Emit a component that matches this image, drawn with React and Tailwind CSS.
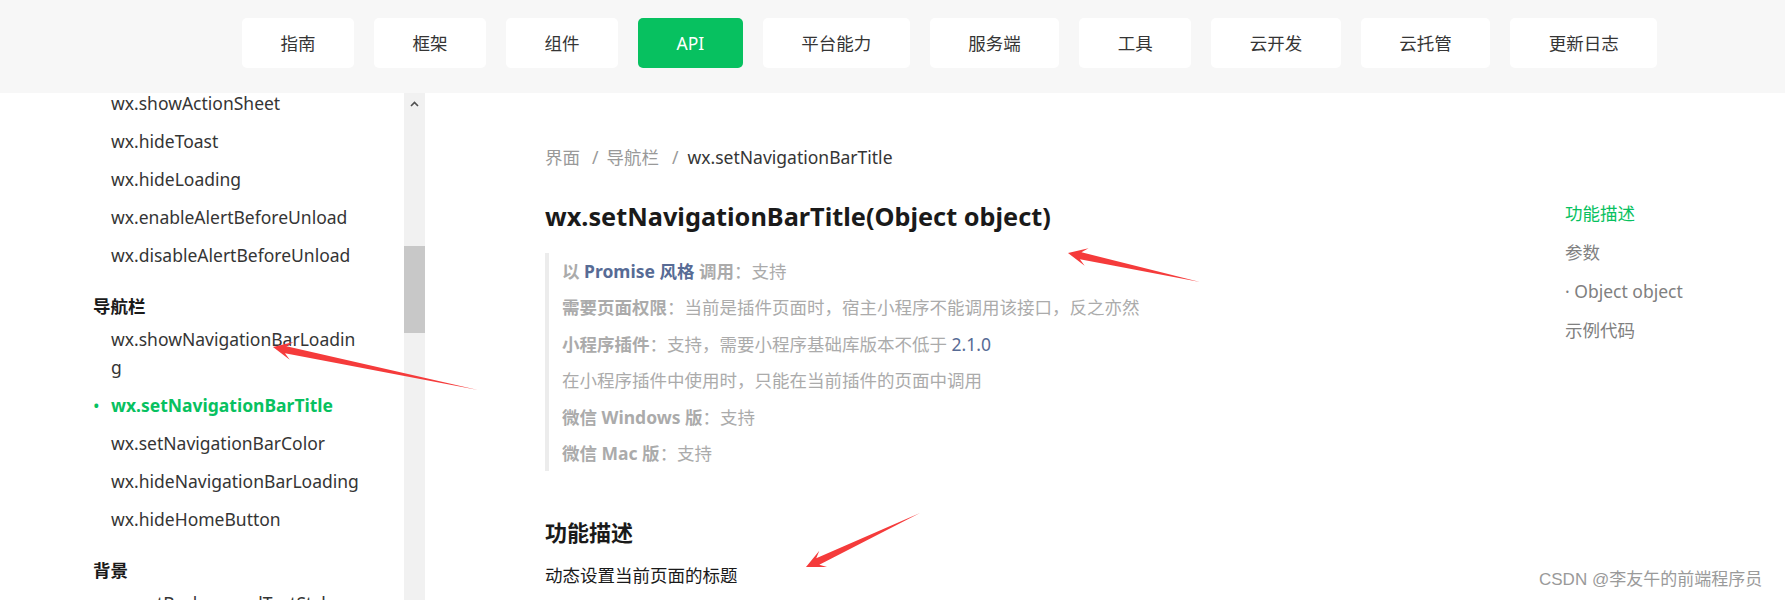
import React from 'react';

const tabs = ['指南', '框架', '组件', 'API', '平台能力', '服务端', '工具', '云开发', '云托管', '更新日志'];

const sideItems = [
  { type: 'item', text: 'wx.showActionSheet' },
  { type: 'item', text: 'wx.hideToast' },
  { type: 'item', text: 'wx.hideLoading' },
  { type: 'item', text: 'wx.enableAlertBeforeUnload' },
  { type: 'item', text: 'wx.disableAlertBeforeUnload' },
  { type: 'head', text: '导航栏' },
  { type: 'item', text: 'wx.showNavigationBarLoadin', wrap: 'g' },
  { type: 'item', text: 'wx.setNavigationBarTitle', active: true },
  { type: 'item', text: 'wx.setNavigationBarColor' },
  { type: 'item', text: 'wx.hideNavigationBarLoading' },
  { type: 'item', text: 'wx.hideHomeButton' },
  { type: 'head', text: '背景' },
  { type: 'item', text: 'wx.setBackgroundTextStyle' },
];

const toc = ['功能描述', '参数', '· Object object', '示例代码'];

// red annotation arrows: tail -> tip
const arrows = [
  { t: [1200, 282], p: [1068, 253] },
  { t: [478, 390], p: [273, 347] },
  { t: [920, 513], p: [806, 567] },
];

const arrowPoints = ({ t, p }) => {
  const dx = p[0] - t[0];
  const dy = p[1] - t[1];
  const len = Math.hypot(dx, dy);
  const d = [dx / len, dy / len];
  const n = [-d[1], d[0]];
  const at = (back, side) => [p[0] - d[0] * back + n[0] * side, p[1] - d[1] * back + n[1] * side];
  const pts = [t, at(13, 3.6), at(19, 9), p, at(19, -9), at(13, -3.6)];
  return pts.map((q) => q.join(',')).join(' ');
};

const App = () => {
  return (
    <div className="relative w-[1785px] h-[600px] overflow-hidden bg-white font-['Noto_Sans','Noto_Sans_CJK_SC',sans-serif] text-[17.5px]">
      {/* Top tabs */}
      <header className="h-[93px] bg-[#f7f7f7] flex items-start pt-[18px] pl-[242px] gap-[20px]">
        {tabs.map((t) => (
          <div
            key={t}
            className={
              t === 'API'
                ? 'h-[50px] px-[38.5px] flex items-center rounded-[5px] bg-[#07c160] text-white'
                : 'h-[50px] px-[38.5px] flex items-center rounded-[5px] bg-white text-[#353535]'
            }
          >
            {t}
          </div>
        ))}
      </header>

      <div className="flex h-[507px]">
        {/* Sidebar */}
        <aside className="w-[404px] overflow-hidden">
          <div className="-mt-[9px] pl-[93px]">
            {sideItems.map((it, i) =>
              it.type === 'head' ? (
                <div key={i} className="mt-[18px] h-[28px] leading-[28px] font-bold text-[#1a1a1a]">
                  {it.text}
                </div>
              ) : (
                <div key={i} className="flex py-[5px] leading-[28px]">
                  <span className="w-[18px] shrink-0 text-[#07c160]">{it.active ? '•' : ''}</span>
                  <span className={it.active ? 'font-bold text-[#07c160]' : 'text-[#353535]'}>
                    {it.text}
                    {it.wrap && (
                      <>
                        <br />
                        {it.wrap}
                      </>
                    )}
                  </span>
                </div>
              )
            )}
          </div>
        </aside>

        {/* Scrollbar */}
        <div className="w-[21px] bg-[#f1f1f1] flex flex-col">
          <div className="h-[21px] flex items-center justify-center">
            <svg width="9" height="6" viewBox="0 0 9 6">
              <polyline points="1,5 4.5,1.5 8,5" fill="none" stroke="#505050" strokeWidth="1.6" />
            </svg>
          </div>
          <div className="mt-[132px] h-[87px] bg-[#c8c8c8]" />
        </div>

        {/* Main doc */}
        <main className="flex-1 pl-[120px] pt-[50px]">
          <div className="h-[28px] leading-[28px] flex">
            <span className="text-[#999]">界面</span>
            <span className="ml-[12px] mr-[8px] text-[#999]">/</span>
            <span className="text-[#999]">导航栏</span>
            <span className="ml-[13px] mr-[9px] text-[#999]">/</span>
            <span className="text-[#353535]">wx.setNavigationBarTitle</span>
          </div>

          <h1 className="mt-[27px] text-[25.3px] leading-[36px] font-bold text-[#1a1a1a]">
            wx.setNavigationBarTitle(Object object)
          </h1>

          <div className="mt-[19px] border-l-4 border-[#ececec] pl-[13px] leading-[36.4px] text-[#ababab]">
            <p>
              <b>以 </b>
              <b className="text-[#576b95]">Promise 风格</b>
              <b> 调用</b>：支持
            </p>
            <p>
              <b>需要页面权限</b>：当前是插件页面时，宿主小程序不能调用该接口，反之亦然
            </p>
            <p>
              <b>小程序插件</b>：支持，需要小程序基础库版本不低于 <span className="text-[#576b95]">2.1.0</span>
            </p>
            <p>在小程序插件中使用时，只能在当前插件的页面中调用</p>
            <p>
              <b>微信 Windows 版</b>：支持
            </p>
            <p>
              <b>微信 Mac 版</b>：支持
            </p>
          </div>

          <h2 className="mt-[46px] text-[22px] leading-[30px] font-bold text-[#1a1a1a]">功能描述</h2>
          <p className="mt-[14px] leading-[28px] text-[#1a1a1a]">动态设置当前页面的标题</p>
        </main>

        {/* Right TOC */}
        <nav className="w-[220px] pt-[100px]">
          {toc.map((t, i) => (
            <div key={t} className={i === 0 ? 'py-[5.5px] leading-[28px] text-[#07c160]' : 'py-[5.5px] leading-[28px] text-[#808080]'}>
              {t}
            </div>
          ))}
        </nav>
      </div>

      {/* Annotation arrows */}
      <svg className="absolute inset-0 pointer-events-none" width="1785" height="600">
        {arrows.map((a, i) => (
          <polygon key={i} points={arrowPoints(a)} fill="#f53b3b" />
        ))}
      </svg>

      {/* Watermark */}
      <div className="absolute left-[1539px] top-[568px] text-[17px] leading-[24px] text-[#9a9a9a] font-['Liberation_Sans','Noto_Sans_CJK_SC',sans-serif]">
        CSDN @李友午的前端程序员
      </div>
    </div>
  );
};

export default App;
